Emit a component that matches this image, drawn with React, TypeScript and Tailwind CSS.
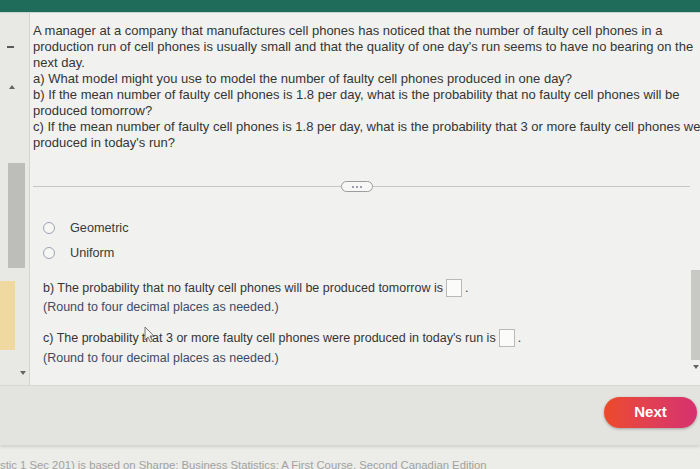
const FONT = { fontFamily: '"Liberation Sans", Arial, sans-serif' }

const questionLines = [
  'A manager at a company that manufactures cell phones has noticed that the number of faulty cell phones in a',
  "production run of cell phones is usually small and that the quality of one day's run seems to have no bearing on the",
  'next day.',
  'a) What model might you use to model the number of faulty cell phones produced in one day?',
  'b) If the mean number of faulty cell phones is 1.8 per day, what is the probability that no faulty cell phones will be',
  'produced tomorrow?',
  'c) If the mean number of faulty cell phones is 1.8 per day, what is the probability that 3 or more faulty cell phones were',
  "produced in today's run?",
]

const Radio = ({ label }: { label: string }) => (
  <div className="flex h-4 items-center">
    <span className="ml-[13px] h-[12px] w-[12px] shrink-0 rounded-full border-[1.5px] border-[#9ea3b3] bg-[#f6f6f4]" />
    <span className="ml-[15px] text-[12.7px] leading-4 text-[#3a3a3a]">{label}</span>
  </div>
)

const AnswerBox = () => (
  <span className="mx-[3px] inline-block h-[18px] w-[16px] border border-[#b9b9b9] bg-[#fbfbfa] align-middle" />
)

const Cursor = () => (
  <svg
    className="pointer-events-none absolute left-[2px] top-[-4px]"
    width="11"
    height="17"
    viewBox="0 0 11 17"
  >
    <path
      d="M1 1 L1 14 L4 11 L6.5 16 L8.5 15 L6 10 L10 10 Z"
      fill="#f4f4f2"
      stroke="#6a6a6a"
      strokeWidth="0.9"
      strokeLinejoin="round"
    />
  </svg>
)

export default function App() {
  return (
    <div className="flex h-[469px] w-[700px] flex-col overflow-hidden bg-[#ecece9]" style={FONT}>
      {/* top bar */}
      <div className="h-[12px] shrink-0 bg-[#1f6c5a]" />
      <div className="h-px shrink-0 bg-[#c9d3cf]" />

      <div className="flex h-[372px] shrink-0">
        {/* left rail */}
        <div className="flex w-[30px] shrink-0 flex-col border-r border-[#d3d3d0] bg-[#e8e8e5]">
          <div className="ml-[7px] mt-[33px] h-[2px] w-[7px] bg-[#5a5a5a]" />
          <div className="ml-[9px] mt-[37px] h-0 w-0 border-x-[3px] border-b-[4px] border-x-transparent border-b-[#666]" />
          <div className="ml-[8px] mt-[74px] h-[105px] w-[17px] bg-[#bdbdba]" />
          <div className="mt-[13px] h-[69px] w-[15px] bg-[#efd9a1]" />
          <div className="ml-[20px] mt-[21px] h-0 w-0 border-x-[3px] border-t-[4px] border-x-transparent border-t-[#666]" />
        </div>

        {/* content */}
        <div className="flex min-w-0 flex-1 bg-[#f1f1ef]">
          <div className="min-w-0 flex-1">
            <div className="pl-[3px] pt-[10px] text-[13px] leading-4 text-[#353535]">
              {questionLines.map((line) => (
                <div key={line} className="whitespace-nowrap">
                  {line}
                </div>
              ))}
            </div>

            <div className="ml-[3px] mt-[30px] flex items-center">
              <div className="h-px w-[308px] bg-[#c6c6c4]" />
              <div className="flex h-[11px] w-[32px] items-center justify-center gap-[2px] rounded-full border border-[#9c9c9c] bg-[#f7f7f5]">
                <span className="h-[2px] w-[2px] rounded-full bg-[#7a8090]" />
                <span className="h-[2px] w-[2px] rounded-full bg-[#7a8090]" />
                <span className="h-[2px] w-[2px] rounded-full bg-[#7a8090]" />
              </div>
              <div className="h-px flex-1 bg-[#c6c6c4]" />
            </div>

            <div className="mt-[28px] flex flex-col gap-[9px]">
              <Radio label="Geometric" />
              <Radio label="Uniform" />
            </div>

            <div className="ml-[13px] mt-[18px] text-[12.5px] leading-4 text-[#353535]">
              <div className="flex h-[18px] items-center whitespace-nowrap">
                b) The probability that no faulty cell phones will be produced tomorrow is
                <AnswerBox />.
              </div>
              <div className="mt-[2px] text-[#404a66]">(Round to four decimal places as needed.)</div>

              <div className="mt-[14px] flex h-[18px] items-center whitespace-nowrap">
                c) The probability{' '}
                <span className="relative ml-[3px]">
                  that
                  <Cursor />
                </span>
                &nbsp;3 or more faulty cell phones were produced in today&apos;s run is
                <AnswerBox />.
              </div>
              <div className="mt-[3px] text-[#404a66]">(Round to four decimal places as needed.)</div>
            </div>
          </div>

          {/* right scrollbar */}
          <div className="flex w-[10px] shrink-0 flex-col items-end">
            <div className="mt-[257px] h-[90px] w-[9px] bg-[#c8c8c5]" />
            <div className="mr-[1px] mt-[5px] h-0 w-0 border-x-[3px] border-t-[4px] border-x-transparent border-t-[#666]" />
          </div>
        </div>
      </div>

      {/* footer */}
      <div className="flex h-[60px] shrink-0 items-start justify-end border-t border-[#d6d6d3] bg-[#e3e3e0] pr-[3px] pt-[11px] shadow-[0_2px_3px_rgba(0,0,0,0.12)]">
        <button className="h-[31px] w-[93px] rounded-full bg-gradient-to-r from-[#ec4a27] to-[#d6316f] text-[15px] font-bold text-white shadow-[0_1px_3px_rgba(0,0,0,0.3)]">
          Next
        </button>
      </div>

      <div className="whitespace-nowrap pt-[12px] text-[11.3px] leading-4 text-[#a2a2a0]">
        stic 1 Sec 201) is based on Sharpe: Business Statistics: A First Course, Second Canadian Edition
      </div>
    </div>
  )
}
